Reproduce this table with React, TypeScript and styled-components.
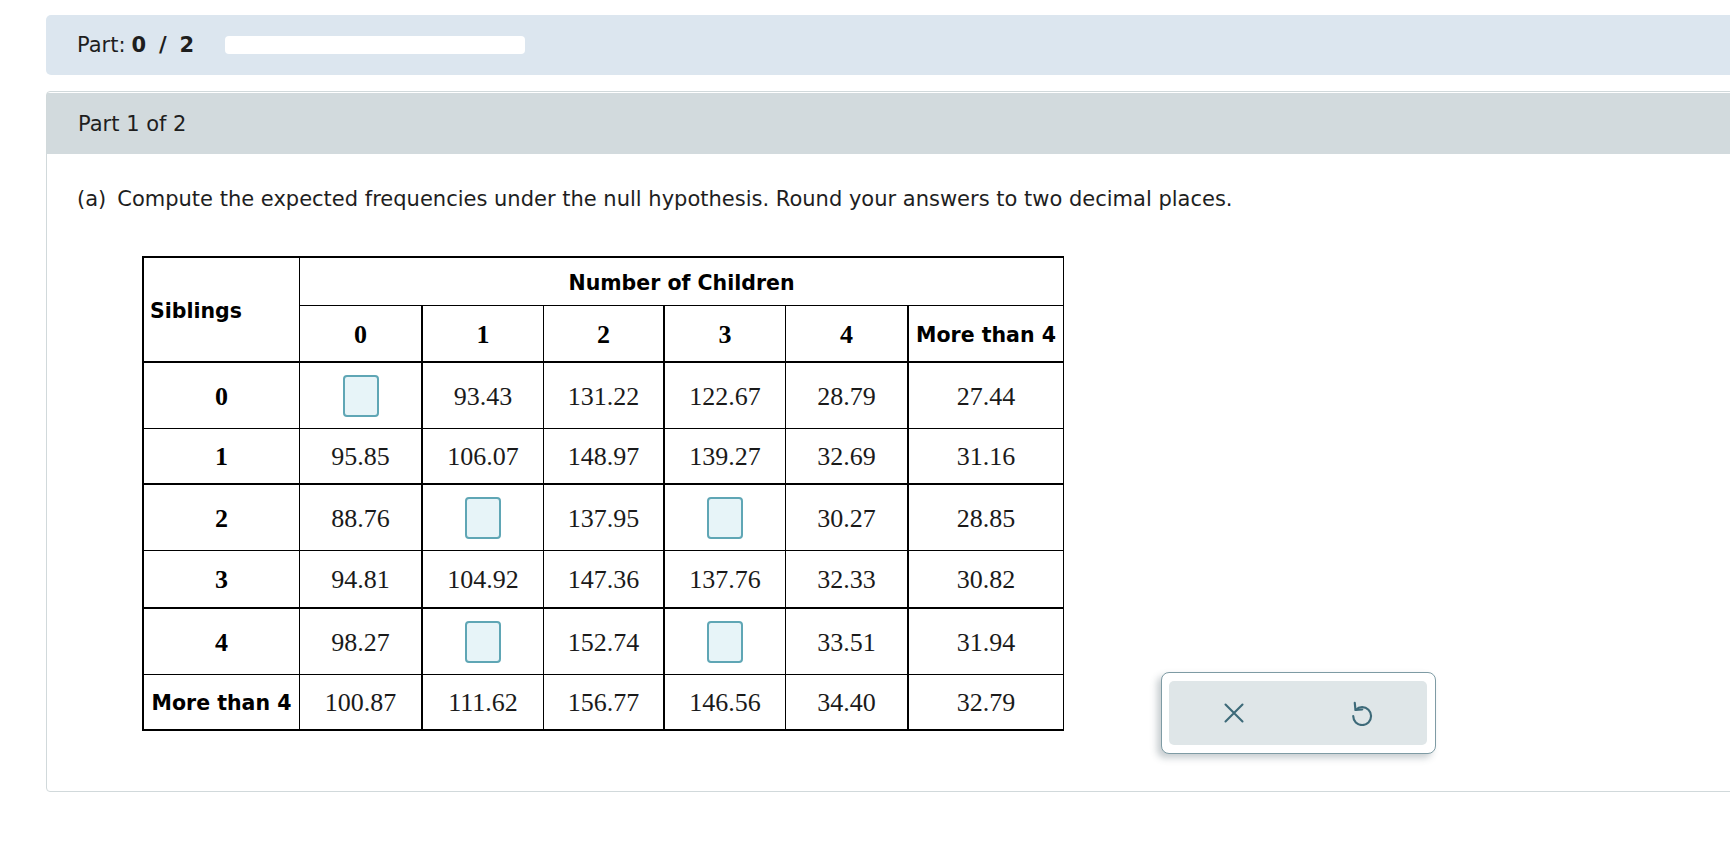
import React from "react";
import styled, { createGlobalStyle } from "styled-components";

const GlobalStyle = createGlobalStyle`
  html, body {
    margin: 0;
    padding: 0;
    overflow: hidden;
    background: #ffffff;
  }
  body {
    font-family: "DejaVu Sans", Verdana, sans-serif;
    color: #1e1e1e;
  }
`;

const Page = styled.div`
  padding: 15px 0 0 46px;
  margin-right: -60px;
`;

const StatusBar = styled.div`
  display: flex;
  align-items: center;
  height: 60px;
  padding-left: 31px;
  background: #dce6ef;
  border-radius: 5px;
  font-size: 21px;
`;

const PartCount = styled.strong`
  font-weight: bold;
  word-spacing: 5.5px;
  margin-left: 6px;
`;

const Track = styled.div`
  width: 300px;
  height: 18px;
  margin-left: 31px;
  background: #ffffff;
  border-radius: 4px;
`;

const Card = styled.section`
  margin-top: 16px;
  border: 1px solid #d1d9db;
  border-radius: 4px;
`;

const CardHeader = styled.div`
  display: flex;
  align-items: center;
  height: 61px;
  margin-top: 1px;
  padding-left: 31px;
  background: #d2dadd;
  font-size: 21px;
`;

const CardBody = styled.div`
  padding: 33px 29px 37px 30px;
`;

const Prompt = styled.p`
  margin: 0;
  font-size: 21px;
  line-height: 25px;
`;

const PromptLabel = styled.span`
  margin-right: 11px;
`;

const Workspace = styled.div`
  display: flex;
  align-items: flex-start;
  margin-top: 44px;
  padding-left: 65px;
`;

const Grid = styled.div`
  display: grid;
  grid-template-columns: 156px 123px 121px 121px 121px 123px 155px;
  grid-template-rows: 48px 57px 66px 56px 66px 58px 66px 56px;
  width: fit-content;
  border-left: 2px solid #000;
  border-top: 2px solid #000;
`;

const Cell = styled.div<{ $right: number; $bottom: number; $align?: "left" | "center" }>`
  box-sizing: border-box;
  display: flex;
  align-items: center;
  justify-content: ${(p) => (p.$align === "left" ? "flex-start" : "center")};
  padding: ${(p) => (p.$align === "left" ? "2px 0 0 6px" : "2px 0 0")};
  border-right: ${(p) => p.$right}px solid #000;
  border-bottom: ${(p) => p.$bottom}px solid #000;
  font-family: "Liberation Serif", "Times New Roman", serif;
  font-size: 26px;
  color: #1a1a1a;
  white-space: nowrap;
`;

const SansHead = styled.span`
  font-family: "DejaVu Sans", Verdana, sans-serif;
  font-weight: bold;
  font-size: 20.5px;
  color: #000;
`;

const SerifHead = styled.span`
  font-weight: bold;
  color: #000;
`;

const AnswerBox = styled.div`
  box-sizing: border-box;
  width: 36px;
  height: 42px;
  margin-top: -2px;
  border: 2px solid #5fa6b5;
  border-radius: 4px;
  background: #e7f4f8;
`;

const ToolPanel = styled.div`
  box-sizing: border-box;
  width: 275px;
  height: 82px;
  margin-left: 97px;
  margin-top: 416px;
  padding: 8px 8px 8px 7px;
  background: #ffffff;
  border: 1px solid #7e9ba4;
  border-radius: 8px;
  box-shadow: -4px 4px 7px rgba(70, 90, 100, 0.3);
`;

const ToolGroup = styled.div`
  display: grid;
  grid-template-columns: 1fr 1fr;
  height: 100%;
  background: #dfe6e8;
  border-radius: 5px;
`;

const ToolButton = styled.button`
  display: flex;
  align-items: center;
  justify-content: center;
  padding: 0;
  border: 0;
  background: transparent;
  color: #3d6a79;
  cursor: pointer;
`;

const colRight = [1, 2, 1, 2, 1, 2, 1];
const headers = ["0", "1", "2", "3", "4"];
const rowLabels = ["0", "1", "2", "3", "4", "More than 4"];
const data: (string | null)[][] = [
  [null, "93.43", "131.22", "122.67", "28.79", "27.44"],
  ["95.85", "106.07", "148.97", "139.27", "32.69", "31.16"],
  ["88.76", null, "137.95", null, "30.27", "28.85"],
  ["94.81", "104.92", "147.36", "137.76", "32.33", "30.82"],
  ["98.27", null, "152.74", null, "33.51", "31.94"],
  ["100.87", "111.62", "156.77", "146.56", "34.40", "32.79"],
];
const bodyBottoms = [1, 2, 1, 2, 1, 2];

const XIcon = () => (
  <svg width="20" height="20" viewBox="0 0 20 20" fill="none" stroke="currentColor" strokeWidth="2.1" strokeLinecap="round">
    <path d="M1.5 1.5 L18.5 18.5 M18.5 1.5 L1.5 18.5" />
  </svg>
);

const UndoIcon = () => (
  <svg width="21" height="25" viewBox="2 2.3 17.6 21" fill="none" stroke="currentColor" strokeWidth="1.8" strokeLinecap="round" strokeLinejoin="round">
    <path d="M3 15 A7.5 7.5 0 1 0 10.5 7.5 A7.5 7.5 0 0 0 5.2 9.7" />
    <path d="M4.3 3.8 L4.9 9.9 L10.6 9.4" />
  </svg>
);

export default function App() {
  return (
    <>
      <GlobalStyle />
      <Page>
        <StatusBar>
          <span>
            Part:<PartCount>0 / 2</PartCount>
          </span>
          <Track />
        </StatusBar>
        <Card>
          <CardHeader>Part 1 of 2</CardHeader>
          <CardBody>
            <Prompt>
              <PromptLabel>(a)</PromptLabel>Compute the expected frequencies under the null hypothesis. Round your answers to two decimal places.
            </Prompt>
            <Workspace>
              <Grid>
                <Cell $right={1} $bottom={2} $align="left" style={{ gridRow: "1 / span 2" }}>
                  <SansHead>Siblings</SansHead>
                </Cell>
                <Cell $right={1} $bottom={1} style={{ gridColumn: "2 / span 6" }}>
                  <SansHead>Number of Children</SansHead>
                </Cell>
                {headers.map((h, i) => (
                  <Cell key={h} $right={colRight[i + 1]} $bottom={2}>
                    <SerifHead>{h}</SerifHead>
                  </Cell>
                ))}
                <Cell $right={1} $bottom={2}>
                  <SansHead>More than 4</SansHead>
                </Cell>
                {data.map((row, r) => (
                  <React.Fragment key={r}>
                    <Cell $right={1} $bottom={bodyBottoms[r]}>
                      {r === 5 ? <SansHead>{rowLabels[r]}</SansHead> : <SerifHead>{rowLabels[r]}</SerifHead>}
                    </Cell>
                    {row.map((v, c) => (
                      <Cell key={c} $right={colRight[c + 1]} $bottom={bodyBottoms[r]}>
                        {v === null ? <AnswerBox /> : v}
                      </Cell>
                    ))}
                  </React.Fragment>
                ))}
              </Grid>
              <ToolPanel>
                <ToolGroup>
                  <ToolButton aria-label="Clear">
                    <XIcon />
                  </ToolButton>
                  <ToolButton aria-label="Undo">
                    <UndoIcon />
                  </ToolButton>
                </ToolGroup>
              </ToolPanel>
            </Workspace>
          </CardBody>
        </Card>
      </Page>
    </>
  );
}
